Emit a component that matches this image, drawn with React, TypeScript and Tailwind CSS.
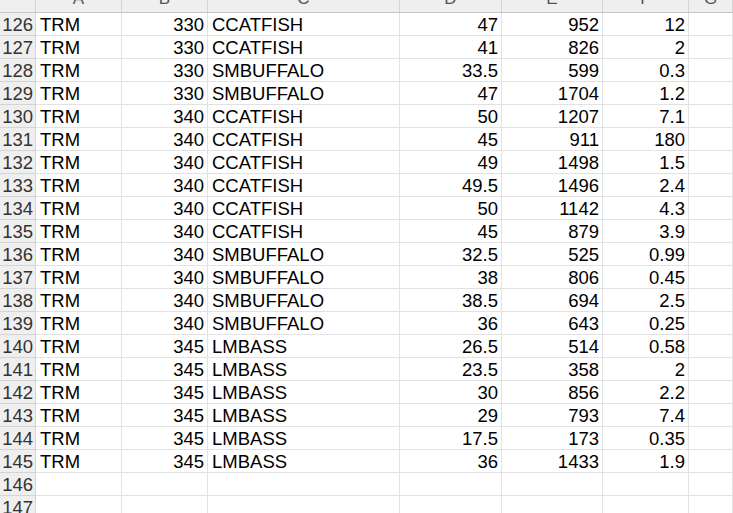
const rows: [number, string, number, string, string, string, string][] = [
  [126, 'TRM', 330, 'CCATFISH', '47', '952', '12'],
  [127, 'TRM', 330, 'CCATFISH', '41', '826', '2'],
  [128, 'TRM', 330, 'SMBUFFALO', '33.5', '599', '0.3'],
  [129, 'TRM', 330, 'SMBUFFALO', '47', '1704', '1.2'],
  [130, 'TRM', 340, 'CCATFISH', '50', '1207', '7.1'],
  [131, 'TRM', 340, 'CCATFISH', '45', '911', '180'],
  [132, 'TRM', 340, 'CCATFISH', '49', '1498', '1.5'],
  [133, 'TRM', 340, 'CCATFISH', '49.5', '1496', '2.4'],
  [134, 'TRM', 340, 'CCATFISH', '50', '1142', '4.3'],
  [135, 'TRM', 340, 'CCATFISH', '45', '879', '3.9'],
  [136, 'TRM', 340, 'SMBUFFALO', '32.5', '525', '0.99'],
  [137, 'TRM', 340, 'SMBUFFALO', '38', '806', '0.45'],
  [138, 'TRM', 340, 'SMBUFFALO', '38.5', '694', '2.5'],
  [139, 'TRM', 340, 'SMBUFFALO', '36', '643', '0.25'],
  [140, 'TRM', 345, 'LMBASS', '26.5', '514', '0.58'],
  [141, 'TRM', 345, 'LMBASS', '23.5', '358', '2'],
  [142, 'TRM', 345, 'LMBASS', '30', '856', '2.2'],
  [143, 'TRM', 345, 'LMBASS', '29', '793', '7.4'],
  [144, 'TRM', 345, 'LMBASS', '17.5', '173', '0.35'],
  [145, 'TRM', 345, 'LMBASS', '36', '1433', '1.9'],
];

const cols = 'grid grid-cols-[36px_86px_86px_192px_102px_101px_86px_1fr]';
const cell = 'h-[23px] border-r border-b border-[#e2e2e2] leading-[24px] whitespace-nowrap overflow-hidden';
const numCell = `${cell} text-right pr-[3px]`;
const txtCell = `${cell} pl-[4px]`;
const rowHead = 'h-[23px] border-r border-b border-[#d4d4d4] bg-[#efefef] text-right pr-[2px] leading-[24px] text-[#333] overflow-hidden';

export default function App() {
  const empty = [146, 147];
  return (
    <div className="w-[733px] h-[513px] overflow-hidden bg-white text-black text-[18.5px]" style={{ fontFamily: '"Liberation Sans", Arial, sans-serif' }}>
      {/* column header, mostly scrolled off the top */}
      <div className={`${cols} h-[13px] overflow-hidden bg-[#efefef] border-b border-[#c6c6c6] text-[17px] text-[#555]`}>
        {['', 'A', 'B', 'C', 'D', 'E', 'F', 'G'].map((h, i) => (
          <div key={i} className="h-[12px] border-r border-[#d4d4d4] flex justify-center items-end overflow-hidden">
            <span className="leading-[17px] translate-y-[-5px]">{h}</span>
          </div>
        ))}
      </div>
      {rows.map(([n, a, b, c, d, e, f]) => (
        <div key={n} className={cols}>
          <div className={rowHead}>{n}</div>
          <div className={txtCell}>{a}</div>
          <div className={numCell}>{b}</div>
          <div className={txtCell}>{c}</div>
          <div className={numCell}>{d}</div>
          <div className={numCell}>{e}</div>
          <div className={numCell}>{f}</div>
          <div className={cell}></div>
        </div>
      ))}
      {empty.map((n) => (
        <div key={n} className={cols}>
          <div className={rowHead}>{n}</div>
          <div className={cell}></div>
          <div className={cell}></div>
          <div className={cell}></div>
          <div className={cell}></div>
          <div className={cell}></div>
          <div className={cell}></div>
          <div className={cell}></div>
        </div>
      ))}
    </div>
  );
}
